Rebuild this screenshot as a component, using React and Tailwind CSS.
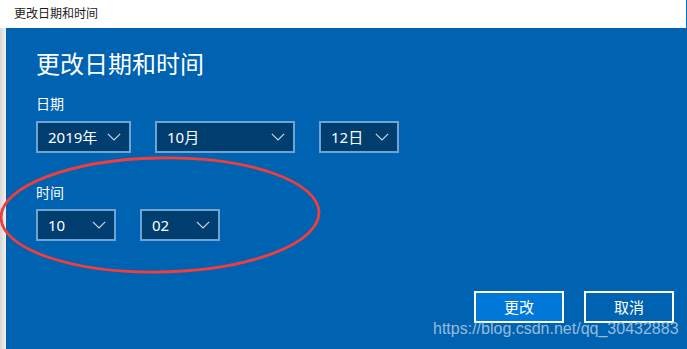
import React from "react";

const font = { fontFamily: '"Noto Sans", "Noto Sans CJK SC", sans-serif' };

function Chevron() {
  return (
    <svg width="14" height="8" viewBox="0 0 14 8" className="shrink-0">
      <path d="M0.8 0.8 L7 7 L13.2 0.8" fill="none" stroke="#c9d9e8" strokeWidth="1.2" />
    </svg>
  );
}

function Select({ value, w }) {
  return (
    <div
      className={`${w} h-[32px] flex items-center justify-between pl-[10px] pr-[8px] bg-[#003e6f] border-2 border-[#6fa3d4] text-white text-[15px]`}
    >
      <span className="leading-none">{value}</span>
      <Chevron />
    </div>
  );
}

export default function App() {
  return (
    <div
      className="relative w-[687px] h-[349px] overflow-hidden flex flex-col bg-white"
      style={font}
    >
      <div className="h-[28px] shrink-0 flex items-center pl-[14px] bg-white border-r border-[#0078d7] text-[12px] text-[#1a1a1a]">
        更改日期和时间
      </div>
      <div className="flex flex-1">
        <div className="w-[6px] shrink-0 bg-gradient-to-r from-[#d6d6d6] to-[#f2f2f2]" />
        <div className="flex-1 bg-[#0063b1] flex flex-col pl-[30px] pr-[13px]">
          <div className="mt-[20px] h-[32px] leading-[32px] text-[24px] text-white">
            更改日期和时间
          </div>
          <div className="mt-[14px] h-[20px] leading-[20px] text-[14px] text-white">日期</div>
          <div className="mt-[7px] flex gap-[24px]">
            <Select value="2019年" w="w-[95px]" />
            <Select value="10月" w="w-[140px]" />
            <Select value="12日" w="w-[80px]" />
          </div>
          <div className="mt-[30px] h-[20px] leading-[20px] text-[14px] text-white">时间</div>
          <div className="mt-[6px] flex gap-[24px]">
            <Select value="10" w="w-[80px]" />
            <Select value="02" w="w-[80px]" />
          </div>
          <div className="mt-[50px] flex justify-end gap-[20px]">
            <div className="w-[90px] h-[32px] flex items-center justify-center bg-[#0078d7] border-2 border-white text-white text-[15px]">
              更改
            </div>
            <div className="w-[90px] h-[32px] flex items-center justify-center border-2 border-white text-white text-[15px]">
              取消
            </div>
          </div>
        </div>
      </div>
      <svg
        className="absolute left-0 top-0 pointer-events-none"
        width="687"
        height="349"
        viewBox="0 0 687 349"
      >
        <ellipse
          cx="160"
          cy="215"
          rx="159"
          ry="57"
          transform="rotate(-1 160 215)"
          fill="none"
          stroke="#f23d3d"
          strokeWidth="2.8"
        />
      </svg>
      <div
        className="absolute left-[433px] top-[319px] text-[16px] leading-[20px] text-[#a9c4de] opacity-90"
        style={{ fontFamily: '"Liberation Sans", Arial, sans-serif' }}
      >
        https://blog.csdn.net/qq_30432883
      </div>
    </div>
  );
}
